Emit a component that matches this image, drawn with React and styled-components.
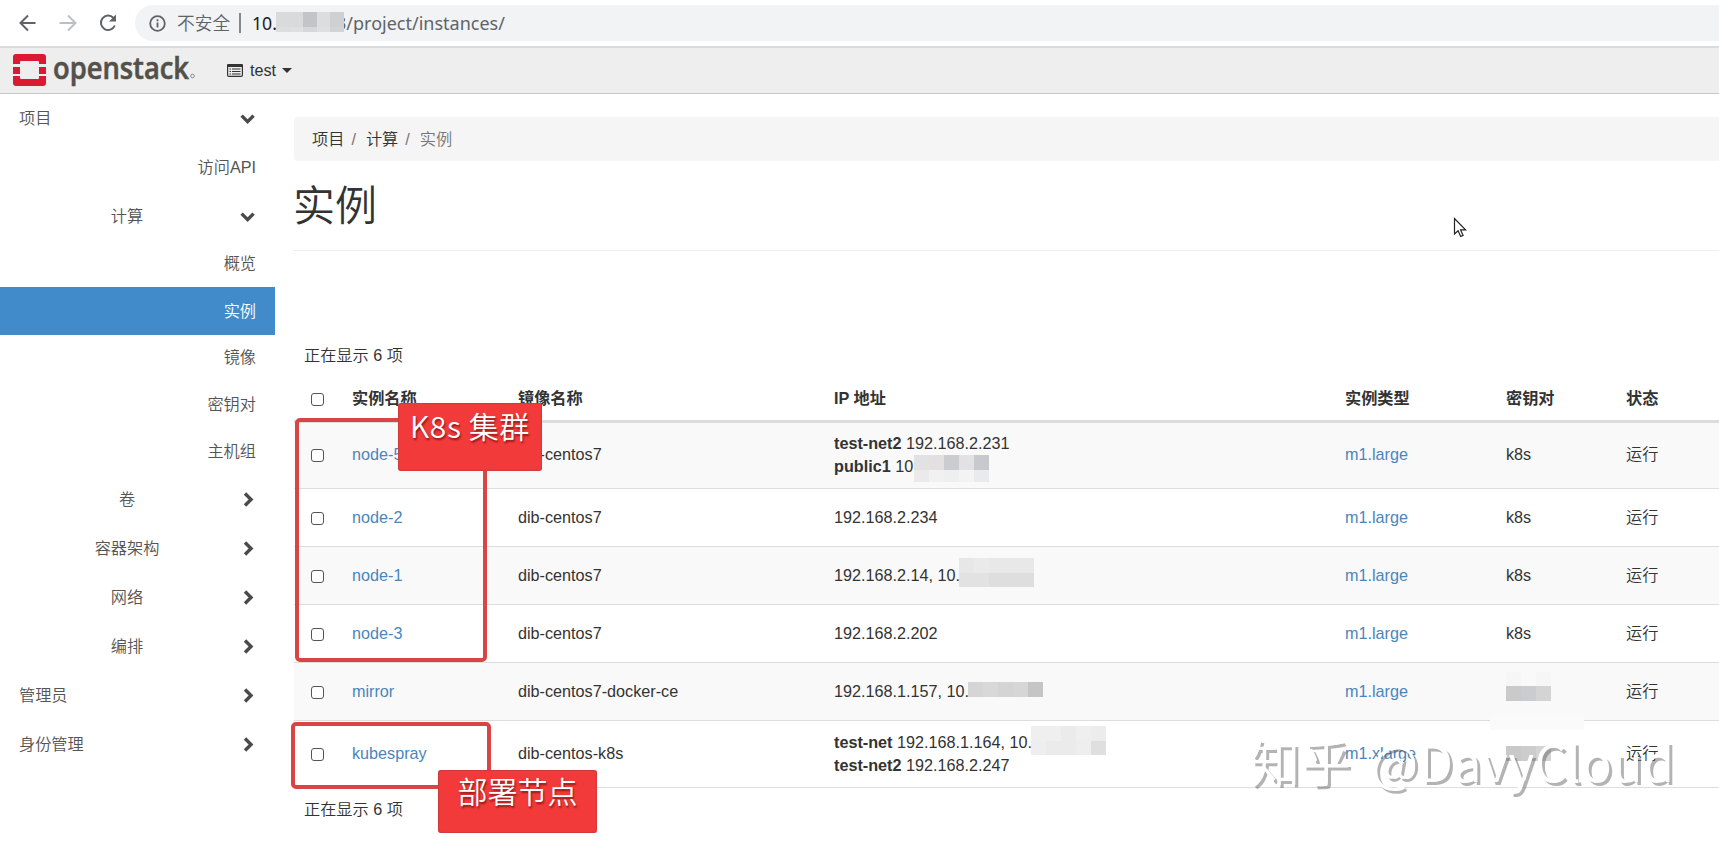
import styled, { createGlobalStyle, css } from "styled-components";

const GlobalStyle = createGlobalStyle`
  * {
    box-sizing: border-box;
  }
  body {
    margin: 0;
    background: #fff;
    color: #333;
    font-family: "Liberation Sans", "Noto Sans CJK SC", sans-serif;
    font-size: 16.2px;
    font-weight: 350;
    line-height: 23px;
    overflow: hidden;
  }
`;

const Page = styled.div`
  width: 1719px;
  height: 844px;
  position: relative;
  overflow: hidden;
`;

/* browser toolbar */

const Toolbar = styled.div`
  height: 48px;
  display: flex;
  align-items: center;
  background: #fff;
  border-bottom: 2px solid #dadbdd;
`;

const NavButtons = styled.div`
  width: 135px;
  display: flex;
  padding-left: 16px;
  gap: 16px;
  align-items: center;

  svg {
    display: block;
  }
`;

const AddressBar = styled.div`
  flex: 1;
  height: 36px;
  border-radius: 18px 0 0 18px;
  background: #f1f3f4;
  display: flex;
  align-items: center;
  padding-left: 14px;
  font-family: "Noto Sans", "Noto Sans CJK SC", sans-serif;
  font-size: 17.7px;
  color: #5f6368;
  white-space: pre;
`;

const Insecure = styled.span`
  margin-left: 11px;
  width: 62px;
`;

const Divider = styled.span`
  width: 2px;
  height: 20px;
  background: #85888c;
`;

const Host = styled.span`
  width: 24px;
  margin-left: 11px;
  color: #202124;
  font-weight: 400;
`;

const Path = styled.span`
  margin-left: 60px;
  font-size: 18px;
  font-weight: 400;
`;

/* openstack top bar */

const TopBar = styled.div`
  height: 46px;
  background: #eee;
  border-bottom: 1px solid #c8c8c8;
  display: flex;
  align-items: center;
  padding-left: 13px;
`;

const Brand = styled.div`
  width: 214px;
  height: 45px;

  svg {
    display: block;
    overflow: visible;
  }
`;

const ProjectPicker = styled.div`
  display: flex;
  align-items: center;
  color: #333;
`;

const PickerName = styled.span`
  margin: 0 6px 0 7px;
`;

const Caret = styled.span`
  border: 5px solid transparent;
  border-top-color: #333;
  border-bottom: 0;
`;

/* body */

const Body = styled.div`
  display: flex;
`;

const Sidebar = styled.nav`
  width: 275px;
  flex: none;
`;

const SideItem = styled.div`
  height: ${(props) => props.$h || 49}px;
  padding: 0 19px;
  display: flex;
  align-items: center;
  color: #555;
  ${(props) =>
    props.$level === "leaf" &&
    css`
      justify-content: flex-end;
    `}
  ${(props) =>
    props.$level !== "leaf" &&
    css`
      padding-right: 20px;
    `}
  ${(props) =>
    props.$active &&
    css`
      background: #428bca;
      color: #fff;
    `}
`;

const SideText = styled.span`
  ${(props) =>
    props.$level !== "leaf" &&
    css`
      flex: 1;
      text-align: ${props.$level === "group" ? "center" : "left"};
      padding-right: ${props.$level === "group" ? 5 : 0}px;
    `}
`;

const Main = styled.main`
  flex: 1;
  padding: 23px 0 0 19px;
`;

const Breadcrumb = styled.div`
  height: 44px;
  border-radius: 4px 0 0 4px;
  background: #f5f5f5;
  display: flex;
  align-items: center;
  padding-left: 18px;
  color: #777;
`;

const Crumb = styled.span`
  color: ${(props) => (props.$last ? "#777" : "#333")};
`;

const Slash = styled.span`
  width: 21.5px;
  padding-left: 7px;
`;

const Title = styled.h1`
  margin: 0 0 0 -1px;
  height: 90px;
  padding-top: 17px;
  border-bottom: 1px solid #eee;
  font-size: 42px;
  font-weight: 350;
  line-height: 58px;
`;

const Count = styled.div`
  padding: 0 10px;
  margin-top: ${(props) => props.$top}px;
  height: 23px;
`;

const Table = styled.div`
  margin-top: 9px;
  border-bottom: 1px solid #ddd;
`;

const Row = styled.div`
  height: ${(props) => props.$h || 58}px;
  display: grid;
  grid-template-columns: 58px 166px 316px 511px 161px 120px 1fr;
  align-items: center;
  padding-bottom: ${(props) => props.$pb || 0}px;
  border-top: 1px solid #ddd;
  background: ${(props) => (props.$odd ? "#f9f9f9" : "#fff")};
`;

const HeadRow = styled(Row)`
  height: 46px;
  border-top: 0;
  border-bottom: 2px solid #ddd;
  font-weight: 700;
`;

const Check = styled.span`
  display: block;
  width: 13px;
  height: 13px;
  margin: 2px 0 0 17px;
  border: 1px solid #555;
  border-radius: 3px;
  background: #fff;
`;

const Link = styled.a`
  color: #4a86bd;
`;

const IpLine = styled.div`
  white-space: nowrap;
`;

/* drawn over the page */

const Mosaic = styled.div`
  position: absolute;
  left: ${(props) => props.$x}px;
  top: ${(props) => props.$y}px;
  width: ${(props) => props.$w}px;
  display: grid;
  grid-template-columns: repeat(${(props) => props.$cols}, 1fr);
`;

const Tile = styled.span`
  height: ${(props) => props.$h}px;
  background: ${(props) => props.$c};
`;

const RedBox = styled.div`
  position: absolute;
  left: ${(props) => props.$x}px;
  top: ${(props) => props.$y}px;
  width: ${(props) => props.$w}px;
  height: ${(props) => props.$h}px;
  border: 4px solid #d94444;
  border-radius: 5px;
`;

const RedLabel = styled(RedBox)`
  border: 0;
  border-radius: 3px;
  background: #f23a3a;
  box-shadow: inset 0 0 1px 1px rgba(170, 60, 60, 0.5);
  color: #fff;
  font-family: "Noto Sans CJK SC", sans-serif;
  font-size: 30px;
  font-weight: 350;
  line-height: ${(props) => props.$lh}px;
  letter-spacing: ${(props) => props.$ls || 0}px;
  text-align: center;
  white-space: nowrap;
  text-shadow: 1px 2px 2px rgba(80, 0, 0, 0.6);
`;

const Watermark = styled.div`
  position: absolute;
  left: 1250px;
  top: 725px;
  font-family: "Noto Sans CJK SC", sans-serif;
  font-size: 50px;
  line-height: 70px;
  letter-spacing: 0.7px;
  word-spacing: 8px;
  white-space: nowrap;
  color: #fff;
  text-shadow: 3px 3px 0 rgba(90, 90, 90, 0.46);
`;

const Cursor = styled.svg`
  position: absolute;
  left: 1453px;
  top: 217px;
`;

const sideItems = [
  { text: "项目", level: "top", open: true },
  { text: "访问API", level: "leaf" },
  { text: "计算", level: "group", open: true, h: 48 },
  { text: "概览", level: "leaf", h: 47 },
  { text: "实例", level: "leaf", h: 48, active: true },
  { text: "镜像", level: "leaf", h: 45 },
  { text: "密钥对", level: "leaf", h: 48 },
  { text: "主机组", level: "leaf", h: 47 },
  { text: "卷", level: "group" },
  { text: "容器架构", level: "group" },
  { text: "网络", level: "group" },
  { text: "编排", level: "group" },
  { text: "管理员", level: "top" },
  { text: "身份管理", level: "top" },
];

const instances = [
  {
    name: "node-5",
    image: "dib-centos7",
    ips: [["test-net2", "192.168.2.231"], ["public1", "10"]],
    type: "m1.large",
    key: "k8s",
    h: 66,
    pb: 2,
  },
  { name: "node-2", image: "dib-centos7", ips: [["", "192.168.2.234"]], type: "m1.large", key: "k8s" },
  { name: "node-1", image: "dib-centos7", ips: [["", "192.168.2.14, 10."]], type: "m1.large", key: "k8s" },
  { name: "node-3", image: "dib-centos7", ips: [["", "192.168.2.202"]], type: "m1.large", key: "k8s" },
  { name: "mirror", image: "dib-centos7-docker-ce", ips: [["", "192.168.1.157, 10."]], type: "m1.large", key: "" },
  {
    name: "kubespray",
    image: "dib-centos-k8s",
    ips: [["test-net", "192.168.1.164, 10."], ["test-net2", "192.168.2.247"]],
    type: "m1.xlarge",
    key: "",
    h: 67,
    pb: 1,
  },
];

const mosaics = [
  { x: 276, y: 12, w: 68, th: [15, 5], rows: [["#d9dadb", "#d9dadb", "#c3c4c7", "#dcddde", "#cfd0d2"], ["#dcddde", "#dedfe0", "#d6d7d9", "#dedfe0", "#d2d3d5"]] },
  { x: 914, y: 455, w: 75, th: [15, 12], rows: [["#e2e2e3", "#e2e0e1", "#cbccd0", "#e3e1e3", "#c8c9cd"], ["#ebe9ea", "#f2f1f1", "#edeff1", "#f3f3f3", "#e8eaec"]] },
  { x: 959, y: 558, w: 75, th: [15, 14], rows: [["#e7e7e7", "#eaeaea", "#e8e8e8", "#e8e8e8", "#e8e8e8"], ["#e2e2e2", "#e2e2e2", "#dedede", "#dedede", "#dedede"]] },
  { x: 968, y: 682, w: 75, th: [15], rows: [["#d5d5d5", "#d8d8d8", "#d4d4d5", "#d6d6d6", "#c5c5c5"]] },
  { x: 1031, y: 726, w: 75, th: [15, 14], rows: [["#efefef", "#efefef", "#ebebec", "#efefef", "#ececec"], ["#eeeeee", "#ebebeb", "#ebebeb", "#eeeeee", "#dfdfdf"]] },
  { x: 1506, y: 672, w: 45, th: [14, 15], rows: [["#f6f6f6", "#f9f9f9", "#f6f6f6"], ["#cacaca", "#cbccd0", "#d4d4d4"]] },
  { x: 1490, y: 714, w: 94, th: [16], rows: [["#fafafa"]] },
  { x: 1506, y: 746, w: 45, th: [15], rows: [["#c9c9c9", "#cccccc", "#d4d4d4"]] },
];

const Chevron = ({ open }) => (
  <svg width="15" height="15" viewBox="0 0 15 15" fill="none" stroke="#4a4a4a" strokeWidth="3.4">
    <path d={open ? "M1.6 4.6 L7.6 10.6 L13.6 4.6" : "M5 1.5 L11 7.5 L5 13.5"} />
  </svg>
);

const BrandLogo = () => (
  <svg width="190" height="45" viewBox="13 48 190 45">
    <path
      fill="#da1a32"
      d="M16 54h27a3 3 0 0 1 3 3v7h-7v-2a1 1 0 0 0-1-1H21a1 1 0 0 0-1 1v2h-7v-7a3 3 0 0 1 3-3zM13 67h7v7h-7zM39 67h7v7h-7zM13 76h7v2a1 1 0 0 0 1 1h17a1 1 0 0 0 1-1v-2h7v7a3 3 0 0 1-3 3H16a3 3 0 0 1-3-3z"
    />
    <text
      x="53"
      y="78.5"
      textLength="136"
      lengthAdjust="spacingAndGlyphs"
      fontFamily="Open Sans, sans-serif"
      fontSize="30"
      fontWeight="600"
      fill="#54504a"
      stroke="#54504a"
      strokeWidth=".6"
    >
      openstack
    </text>
    <circle cx="192.5" cy="76" r="1.8" fill="none" stroke="#77736d" strokeWidth=".8" />
  </svg>
);

const App = () => {
  return (
    <Page>
      <GlobalStyle />
      <Toolbar>
        <NavButtons>
          <svg width="24" height="24" viewBox="0 0 24 24" fill="none" stroke="#5f6368" strokeWidth="2">
            <path d="M19.5 12H5M12 4.5L4.5 12l7.5 7.5" />
          </svg>
          <svg width="24" height="24" viewBox="0 0 24 24" fill="none" stroke="#bdc0c3" strokeWidth="2">
            <path d="M3.5 12h15.5M12 4.5l7.5 7.5-7.5 7.5" />
          </svg>
          <svg width="24" height="24" viewBox="0 0 24 24" fill="none" stroke="#5f6368" strokeWidth="2">
            <path d="M18.8 14.5a7.2 7.2 0 1 1-1.5-7.7l2 2" />
            <path d="M20 3.5v7h-7z" fill="#5f6368" stroke="none" />
          </svg>
        </NavButtons>
        <AddressBar>
          <svg width="17" height="17" viewBox="0 0 17 17" fill="none" stroke="#5f6368" strokeWidth="1.8">
            <circle cx="8.5" cy="8.5" r="7.3" />
            <path d="M8.5 7.5v5M8.5 4.3v2" />
          </svg>
          <Insecure>不安全</Insecure>
          <Divider />
          <Host>10.</Host>
          <Path>3/project/instances/</Path>
        </AddressBar>
      </Toolbar>

      <TopBar>
        <Brand>
          <BrandLogo />
        </Brand>
        <ProjectPicker>
          <svg width="16" height="13" viewBox="0 0 16 13" fill="none" stroke="#333">
            <rect x=".6" y=".6" width="14.8" height="11.8" rx="1.2" strokeWidth="1.2" />
            <path d="M0 1.7h16" strokeWidth="2.6" />
            <path d="M2.5 5h1.5M5 5h8.5M2.5 7.5h1.5M5 7.5h8.5M2.5 10h1.5M5 10h8.5" strokeWidth="1.1" />
          </svg>
          <PickerName>test</PickerName>
          <Caret />
        </ProjectPicker>
      </TopBar>

      <Body>
        <Sidebar>
          {sideItems.map((item) => (
            <SideItem key={item.text} $level={item.level} $h={item.h} $active={item.active}>
              <SideText $level={item.level}>{item.text}</SideText>
              {item.level !== "leaf" && <Chevron open={item.open} />}
            </SideItem>
          ))}
        </Sidebar>

        <Main>
          <Breadcrumb>
            <Crumb>项目</Crumb>
            <Slash>/</Slash>
            <Crumb>计算</Crumb>
            <Slash>/</Slash>
            <Crumb $last>实例</Crumb>
          </Breadcrumb>
          <Title>实例</Title>

          <Count $top={93}>正在显示 6 项</Count>
          <Table>
            <HeadRow>
              <Check />
              <span>实例名称</span>
              <span>镜像名称</span>
              <span>IP 地址</span>
              <span>实例类型</span>
              <span>密钥对</span>
              <span>状态</span>
            </HeadRow>
            {instances.map((item, i) => (
              <Row key={item.name} $odd={i % 2 === 0} $h={item.h} $pb={item.pb}>
                <Check />
                <Link>{item.name}</Link>
                <span>{item.image}</span>
                <div>
                  {item.ips.map(([net, ip]) => (
                    <IpLine key={ip}>
                      {net && <b>{net} </b>}
                      {ip}
                    </IpLine>
                  ))}
                </div>
                <Link>{item.type}</Link>
                <span>{item.key}</span>
                <span>运行</span>
              </Row>
            ))}
          </Table>
          <Count $top={10}>正在显示 6 项</Count>
        </Main>
      </Body>

      {mosaics.map((m) => (
        <Mosaic key={`${m.x}-${m.y}`} $x={m.x} $y={m.y} $w={m.w} $cols={m.rows[0].length}>
          {m.rows.map((row, r) => row.map((c, i) => <Tile key={`${r}-${i}`} $c={c} $h={m.th[r]} />))}
        </Mosaic>
      ))}

      <RedBox $x={295} $y={418} $w={192} $h={244} />
      <RedBox $x={291} $y={722} $w={200} $h={67} />
      <RedLabel $x={398} $y={403} $w={144} $h={68} $lh={45} $ls={0.6}>
        K8s 集群
      </RedLabel>
      <RedLabel $x={438} $y={770} $w={159} $h={63} $lh={41}>
        部署节点
      </RedLabel>

      <Watermark>知乎 @DavyCloud</Watermark>

      <Cursor width="15" height="22" viewBox="0 0 15 22" fill="#fff" stroke="#222" strokeWidth="1.2">
        <path d="M1.5 1.5v15.5l3.6-3.3 2.6 5.8 2.4-1.1-2.5-5.5h5z" />
      </Cursor>
    </Page>
  );
};

export default App;
